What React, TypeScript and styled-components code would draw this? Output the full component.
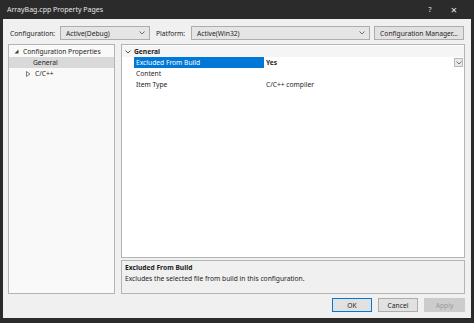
import React from 'react';
import styled, { createGlobalStyle } from 'styled-components';

const GlobalStyle = createGlobalStyle`
  html, body {
    margin: 0;
    padding: 0;
    background: #1e1e1e;
  }
  * {
    box-sizing: border-box;
  }
`;

const Window = styled.div`
  width: 474px;
  height: 323px;
  display: flex;
  flex-direction: column;
  background: #2b2b2b;
  font-family: "Noto Sans", "Open Sans", sans-serif;
  font-size: 6.7px;
  color: #1e1e1e;
  white-space: nowrap;
`;

const TitleBar = styled.div`
  height: 19px;
  display: flex;
  align-items: center;
  padding: 0 7px;
  color: #e6e6e6;
  font-size: 7px;
`;

const Title = styled.span`
  flex: 1;
`;

const TitleButton = styled.span<{ wide?: boolean }>`
  width: ${p => (p.wide ? '26px' : '22px')};
  text-align: center;
  color: #e6e6e6;
  font-size: ${p => (p.wide ? '11px' : '7px')};
`;

const Body = styled.div`
  flex: 1;
  margin: 0 3px 5px 3px;
  background: #f0f0f0;
  display: flex;
  flex-direction: column;
  padding: 7px 6px 2px 5px;
`;

const ConfigRow = styled.div`
  height: 14px;
  display: flex;
  align-items: center;
  padding-left: 2px;
`;

const Label = styled.span<{ width: number }>`
  width: ${p => p.width}px;
`;

const Select = styled.div<{ width: number }>`
  width: ${p => p.width}px;
  height: 14px;
  display: flex;
  align-items: center;
  justify-content: space-between;
  padding: 0 4px 0 5px;
  background: #e5e5e5;
  border: 1px solid #adadad;
`;

const Button = styled.div<{ width: number; primary?: boolean; disabled?: boolean }>`
  width: ${p => p.width}px;
  height: 14px;
  display: flex;
  align-items: center;
  justify-content: center;
  background: ${p => (p.disabled ? '#cccccc' : '#e1e1e1')};
  border: 1px solid ${p => (p.primary ? '#0078d7' : p.disabled ? '#cccccc' : '#adadad')};
  color: ${p => (p.disabled ? '#9a9a9a' : '#1e1e1e')};
`;

const Main = styled.div`
  flex: 1;
  display: flex;
  gap: 6px;
  margin-top: 4px;
`;

const Tree = styled.div`
  width: 107px;
  background: #f9f9f9;
  border: 1px solid #b4b4b4;
  padding-top: 1px;
`;

const TreeRow = styled.div<{ indent: number; selected?: boolean }>`
  height: 11px;
  display: flex;
  align-items: center;
  padding-left: ${p => p.indent}px;
  background: ${p => (p.selected ? '#d9d9d9' : 'transparent')};
`;

const Expander = styled.span`
  width: 9px;
  display: flex;
  align-items: center;
`;

const RightColumn = styled.div`
  flex: 1;
  display: flex;
  flex-direction: column;
  gap: 2px;
`;

const Grid = styled.div`
  flex: 1;
  background: #ffffff;
  border: 1px solid #b4b4b4;
  padding-top: 1px;
`;

const CategoryRow = styled.div`
  height: 11px;
  display: flex;
  align-items: center;
  background: #f5f5f5;
  font-weight: bold;
`;

const Gutter = styled.span`
  width: 12px;
  display: flex;
  justify-content: center;
`;

const GridRow = styled.div`
  height: 11px;
  display: flex;
  align-items: center;
`;

const NameCell = styled.div<{ selected?: boolean }>`
  width: 130px;
  height: 100%;
  display: flex;
  align-items: center;
  padding-left: 2px;
  background: ${p => (p.selected ? '#0078d7' : 'transparent')};
  color: ${p => (p.selected ? '#ffffff' : '#1e1e1e')};
`;

const ValueCell = styled.div<{ bold?: boolean }>`
  flex: 1;
  height: 100%;
  display: flex;
  align-items: center;
  justify-content: space-between;
  padding-left: 2px;
  padding-right: 1px;
  font-weight: ${p => (p.bold ? 'bold' : 'normal')};
`;

const DropButton = styled.span`
  width: 9px;
  height: 9px;
  display: flex;
  align-items: center;
  justify-content: center;
  background: #eaeaea;
  border: 1px solid #b8b8b8;
`;

const Description = styled.div`
  height: 34px;
  border: 1px solid #b4b4b4;
  padding: 2px 3px;
  display: flex;
  flex-direction: column;
  gap: 2px;
`;

const DescTitle = styled.div`
  font-weight: bold;
`;

const Footer = styled.div`
  height: 22px;
  display: flex;
  align-items: center;
  justify-content: flex-end;
  gap: 6px;
  padding-right: 0;
`;

const Chevron = ({ color = '#606060' }: { color?: string }) => (
  <svg width="6" height="4" viewBox="0 0 6 4">
    <path d="M0.5 0.5 L3 3 L5.5 0.5" fill="none" stroke={color} strokeWidth="0.9" />
  </svg>
);

const ExpandedArrow = () => (
  <svg width="5" height="5" viewBox="0 0 5 5">
    <path d="M4.5 0.5 L4.5 4.5 L0.5 4.5 Z" fill="#404040" />
  </svg>
);

const CollapsedArrow = () => (
  <svg width="5" height="6" viewBox="0 0 5 6">
    <path d="M0.5 0.5 L4 3 L0.5 5.5 Z" fill="none" stroke="#606060" strokeWidth="0.8" />
  </svg>
);

export default function App() {
  return (
    <>
      <GlobalStyle />
      <Window>
        <TitleBar>
          <Title>ArrayBag.cpp Property Pages</Title>
          <TitleButton>?</TitleButton>
          <TitleButton wide>×</TitleButton>
        </TitleBar>
        <Body>
          <ConfigRow>
            <Label width={50}>Configuration:</Label>
            <Select width={90}>
              <span>Active(Debug)</span>
              <Chevron />
            </Select>
            <Label width={35} style={{ marginLeft: 6 }}>Platform:</Label>
            <Select width={179}>
              <span>Active(Win32)</span>
              <Chevron />
            </Select>
            <Button width={90} style={{ marginLeft: 4 }}>Configuration Manager...</Button>
          </ConfigRow>
          <Main>
            <Tree>
              <TreeRow indent={5}>
                <Expander><ExpandedArrow /></Expander>
                <span>Configuration Properties</span>
              </TreeRow>
              <TreeRow indent={24} selected>
                <span>General</span>
              </TreeRow>
              <TreeRow indent={17}>
                <Expander><CollapsedArrow /></Expander>
                <span>C/C++</span>
              </TreeRow>
            </Tree>
            <RightColumn>
              <Grid>
                <CategoryRow>
                  <Gutter><Chevron color="#404040" /></Gutter>
                  <span>General</span>
                </CategoryRow>
                <GridRow>
                  <Gutter />
                  <NameCell selected>Excluded From Build</NameCell>
                  <ValueCell bold>
                    <span>Yes</span>
                    <DropButton><Chevron /></DropButton>
                  </ValueCell>
                </GridRow>
                <GridRow>
                  <Gutter />
                  <NameCell>Content</NameCell>
                  <ValueCell />
                </GridRow>
                <GridRow>
                  <Gutter />
                  <NameCell>Item Type</NameCell>
                  <ValueCell>C/C++ compiler</ValueCell>
                </GridRow>
              </Grid>
              <Description>
                <DescTitle>Excluded From Build</DescTitle>
                <div>Excludes the selected file from build in this configuration.</div>
              </Description>
            </RightColumn>
          </Main>
          <Footer>
            <Button width={40} primary>OK</Button>
            <Button width={40}>Cancel</Button>
            <Button width={41} disabled>Apply</Button>
          </Footer>
        </Body>
      </Window>
    </>
  );
}
